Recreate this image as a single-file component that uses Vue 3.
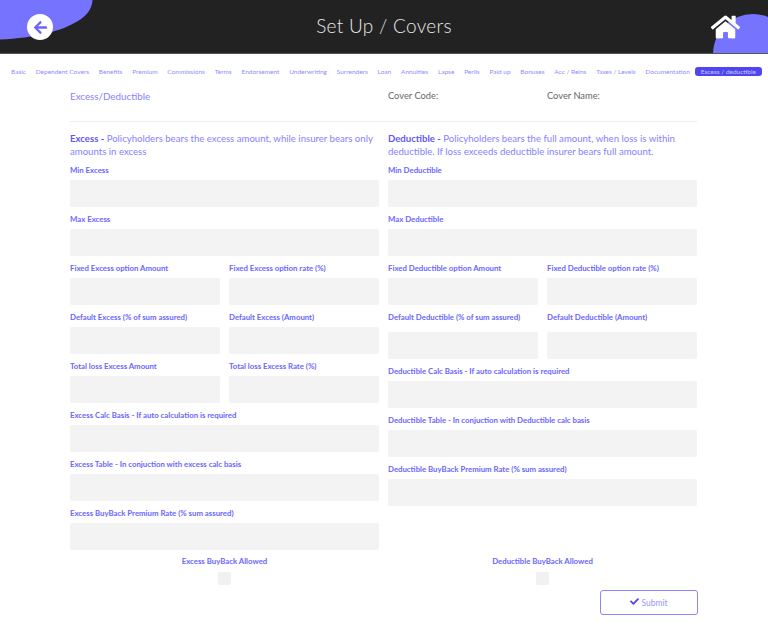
<script setup>
const tabs = [
  "Basic", "Dependent Covers", "Benefits", "Premium", "Commissions", "Terms", "Endorsement",
  "Underwriting", "Surrenders", "Loan", "Annuities", "Lapse", "Perils", "Paid up", "Bonuses",
  "Acc / Reins", "Taxes / Levels", "Documentation", "Excess / deductible",
];

const excessFields = [
  ["Min Excess"],
  ["Max Excess"],
  ["Fixed Excess option Amount", "Fixed Excess option rate (%)"],
  ["Default Excess (% of sum assured)", "Default Excess (Amount)"],
  ["Total loss Excess Amount", "Total loss Excess Rate (%)"],
  ["Excess Calc Basis - If auto calculation is required"],
  ["Excess Table - In conjuction with excess calc basis"],
  ["Excess BuyBack Premium Rate (% sum assured)"],
];

const deductibleFields = [
  ["Min Deductible"],
  ["Max Deductible"],
  ["Fixed Deductible option Amount", "Fixed Deductible option rate (%)"],
  ["Default Deductible (% of sum assured)", "Default Deductible (Amount)"],
  ["Deductible Calc Basis - If auto calculation is required"],
  ["Deductible Table - In conjuction with Deductible calc basis"],
  ["Deductible BuyBack Premium Rate (% sum assured)"],
];
</script>

<template>
  <div class="page">
    <header class="topbar">
      <svg class="blob-left" viewBox="0 0 93 40" width="93" height="40">
        <path fill="#7673ff" d="M0 0H92.500C92 8 88 15 78 21C62 31 35 38 0 39.500Z" />
      </svg>
      <div class="blob-right"></div>
      <span class="back-btn">
        <svg viewBox="0 0 448 512" width="15" height="15">
          <path fill="#6c63ff" d="M257.500 445.100l-22.200 22.200c-9.400 9.400-24.600 9.400-33.900 0L7 273c-9.400-9.400-9.400-24.600 0-33.900L201.400 44.700c9.400-9.400 24.600-9.400 33.900 0l22.200 22.200c9.500 9.500 9.300 25-.4 34.300L136.600 216H424c13.300 0 24 10.700 24 24v32c0 13.300-10.700 24-24 24H136.600l120.500 114.800c9.800 9.300 10 24.800.4 34.300z" />
        </svg>
      </span>
      <h1>Set Up / Covers</h1>
      <svg class="home" viewBox="0 0 576 512" width="31" height="26">
        <path fill="#fff" d="M280.400 148.300L96 300.100V464a16 16 0 0 0 16 16l112.100-.3a16 16 0 0 0 15.900-16V368a16 16 0 0 1 16-16h64a16 16 0 0 1 16 16v95.600a16 16 0 0 0 16 16.100L464 480a16 16 0 0 0 16-16V300L295.700 148.300a12.200 12.200 0 0 0-15.300 0zM571.600 251.500L488 182.600V44.100a12 12 0 0 0-12-12h-56a12 12 0 0 0-12 12v72.600L318.500 43a48 48 0 0 0-61 0L4.300 251.500a12 12 0 0 0-1.600 16.900l25.500 31A12 12 0 0 0 45.200 301l235.200-193.700a12.200 12.200 0 0 1 15.300 0L530.900 301a12 12 0 0 0 16.900-1.600l25.500-31a12 12 0 0 0-1.700-16.900z" />
      </svg>
    </header>

    <nav class="tabs">
      <a v-for="(tab, i) in tabs" :key="tab" :class="{ active: i === tabs.length - 1 }">{{ tab }}</a>
    </nav>

    <main class="content">
      <div class="title-row">
        <div class="title">Excess/Deductible</div>
        <div class="cover-info">
          <span>Cover Code:</span>
          <span>Cover Name:</span>
        </div>
      </div>
      <hr />

      <div class="columns">
        <section>
          <p class="desc"><b>Excess - </b>Policyholders bears the excess amount, while insurer bears only amounts in excess</p>
          <div v-for="row in excessFields" :key="row[0]" class="row">
            <div v-for="label in row" :key="label" class="field">
              <label>{{ label }}</label>
              <input type="text" />
            </div>
          </div>
        </section>

        <section>
          <p class="desc"><b>Deductible - </b>Policyholders bears the full amount, when loss is within deductible. If loss exceeds deductible insurer bears full amount.</p>
          <div v-for="(row, i) in deductibleFields" :key="row[0]" class="row" :class="{ tall: i === 3 }">
            <div v-for="label in row" :key="label" class="field">
              <label>{{ label }}</label>
              <input type="text" />
            </div>
          </div>
        </section>
      </div>

      <div class="columns checks">
        <div class="check">
          <label>Excess BuyBack Allowed</label>
          <input type="checkbox" />
        </div>
        <div class="check">
          <label>Deductible BuyBack Allowed</label>
          <input type="checkbox" />
        </div>
      </div>

      <div class="actions">
        <button type="button">
          <svg viewBox="0 0 512 512" width="9" height="9">
            <path fill="#4f46f0" d="M173.900 439.400L7.500 273c-10-10-10-26.200 0-36.200l36.200-36.200c10-10 26.200-10 36.200 0L192 312.700 432.100 72.600c10-10 26.200-10 36.200 0l36.200 36.200c10 10 10 26.200 0 36.200L210.100 439.400c-10 10-26.200 10-36.200 0z" />
          </svg>
          Submit
        </button>
      </div>
    </main>
  </div>
</template>

<style scoped>
.page {
  width: 768px;
  height: 641px;
  overflow: hidden;
  background: #fff;
  font-family: Lato, "Open Sans", sans-serif;
  color: #8682ff;
}

.topbar {
  position: relative;
  height: 53px;
  background: #222;
  border-bottom: 1px solid #555;
  overflow: hidden;
  display: flex;
  align-items: center;
  justify-content: center;
}

.blob-left {
  position: absolute;
  left: 0;
  top: 0;
}

.blob-right {
  position: absolute;
  left: 713px;
  top: 14px;
  width: 80px;
  height: 80px;
  background: #7673ff;
  border-radius: 50%;
}

.back-btn {
  position: absolute;
  left: 27px;
  top: 14px;
  width: 26px;
  height: 26px;
  border-radius: 50%;
  background: #fff;
  display: flex;
  align-items: center;
  justify-content: center;
}

.home {
  position: absolute;
  left: 710px;
  top: 14px;
}

h1 {
  margin: 0 0 2px;
  font-size: 19px;
  font-weight: 300;
  letter-spacing: 0.3px;
  color: #e8e8e8;
}

.tabs {
  display: flex;
  gap: 9.800px;
  align-items: center;
  padding: 13px 0 0 11px;
  height: 9px;
  font-size: 6.500px;
  white-space: nowrap;
  color: #908cff;
}

.tabs a.active {
  background: #4f46f0;
  color: #c9c7ff;
  margin-left: -5px;
  padding: 1px 6px;
  border-radius: 3px;
}

.content {
  width: 627px;
  margin-left: 70px;
}

.title-row {
  display: flex;
  margin-top: 13px;
  font-size: 9.800px;
  line-height: 14px;
}

.title {
  flex: 0 0 318px;
}

.cover-info {
  display: flex;
  color: #666;
  font-size: 9.300px;
}

.cover-info span {
  width: 159px;
}

hr {
  border: 0;
  border-top: 1px solid #eee;
  margin: 18px 0 0;
}

.columns {
  display: grid;
  grid-template-columns: 309px 309px;
  gap: 9px;
}

.desc {
  margin: 10px 0 0;
  height: 33px;
  font-size: 9.600px;
  line-height: 13px;
}

.desc b {
  font-weight: 700;
  color: #5f58f5;
}

.row {
  display: flex;
  gap: 9px;
  margin-bottom: 7px;
}

.row.tall input {
  margin-top: 10px;
}

.field {
  flex: 1;
  min-width: 0;
}

label {
  display: block;
  font-size: 7.800px;
  font-weight: 700;
  line-height: 10px;
  color: #6a66ff;
  white-space: nowrap;
}

input[type="text"] {
  display: block;
  width: 100%;
  height: 27px;
  margin-top: 5px;
  border: 0;
  border-radius: 2px;
  background: #f3f3f3;
  box-sizing: border-box;
}

.checks {
  margin-top: -1px;
}

.check {
  text-align: center;
}

.check input {
  appearance: none;
  display: block;
  width: 13px;
  height: 13px;
  margin: 6px auto 0;
  background: #f1f1f1;
  border-radius: 2px;
}

.actions {
  display: flex;
  justify-content: flex-end;
  margin-top: 5px;
}

button {
  width: 98px;
  height: 25px;
  margin-right: -1px;
  border: 1px solid #8d87ff;
  border-radius: 3px;
  background: #fff;
  color: #9a95ff;
  font-family: inherit;
  font-size: 8.500px;
  padding: 0;
}
</style>
